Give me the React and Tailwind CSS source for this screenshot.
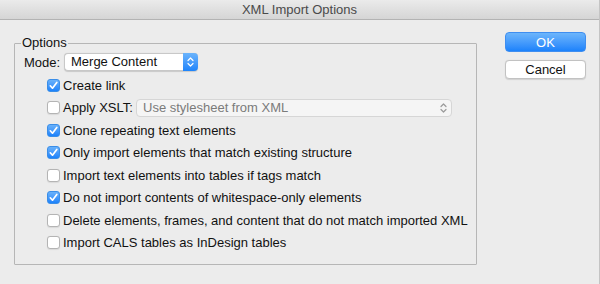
import React from "react";

const Check = () => (
  <svg width="9" height="9" viewBox="0 0 9 9" className="block">
    <path d="M1.3 4.8 L3.5 7.2 L7.8 1.4" fill="none" stroke="white" strokeWidth="1.7" strokeLinecap="round" strokeLinejoin="round" />
  </svg>
);

function Checkbox({ checked }) {
  if (checked) {
    return (
      <div className="w-[13px] h-[13px] shrink-0 rounded-[3px] bg-gradient-to-b from-[#69b1fa] to-[#1a82fb] border border-[#3a8ee8] flex items-center justify-center">
        <Check />
      </div>
    );
  }
  return (
    <div className="w-[13px] h-[13px] shrink-0 rounded-[3px] bg-white border border-[#b4b4b4] shadow-[0_0.5px_1px_rgba(0,0,0,0.08)]" />
  );
}

const Stepper = ({ color }) => (
  <svg width="7" height="10" viewBox="0 0 7 10" className="block">
    <path d="M1 3.5 L3.5 1 L6 3.5 M1 6.5 L3.5 9 L6 6.5" fill="none" stroke={color} strokeWidth="1.2" strokeLinecap="round" strokeLinejoin="round" />
  </svg>
);

function Row({ checked, children }) {
  return (
    <div className="h-[22.5px] flex items-center pl-[32px]">
      <Checkbox checked={checked} />
      <span className="ml-[3px] whitespace-nowrap">{children}</span>
    </div>
  );
}

export default function App() {
  return (
    <div
      className="w-[600px] h-[284px] bg-[#ececec] border-r border-[#c4c4c4] text-[13px] text-[#111] overflow-hidden"
      style={{ fontFamily: '"Liberation Sans", Arial, sans-serif' }}
    >
      <div className="h-[20px] bg-gradient-to-b from-[#ebebeb] to-[#d5d5d5] border-b border-[#b3b3b3] flex items-center justify-center text-[#4a4a4a] leading-none">
        XML Import Options
      </div>
      <div className="flex items-start pl-[14px]">
        <fieldset className="mt-[15px] w-[463px] h-[230px] border border-[#b6b6b6] rounded-[1px]">
          <legend className="ml-[6px] px-[1px] leading-[16px]">Options</legend>
          <div className="h-[18px] mt-[2px] flex items-center pl-[9px]">
            <span className="w-[34px] leading-none whitespace-nowrap">Mode:</span>
            <div className="ml-[6px] w-[134px] h-[18px] flex bg-white rounded-[4px] border border-[#c8c8c8] border-r-0 shadow-[0_0.5px_1px_rgba(0,0,0,0.15)]">
              <span className="flex-1 pl-[6px] leading-[16px]">Merge Content</span>
              <div className="w-[15px] -my-[1px] rounded-r-[4px] bg-gradient-to-b from-[#6ab3fb] to-[#1c84fb] flex items-center justify-center">
                <Stepper color="white" />
              </div>
            </div>
          </div>
          <div className="mt-[3px]">
            <Row checked>Create link</Row>
            <div className="h-[22.5px] flex items-center pl-[32px]">
              <Checkbox checked={false} />
              <span className="ml-[3px] w-[65px] whitespace-nowrap">Apply XSLT:</span>
              <div className="ml-[8px] w-[316px] h-[18px] flex items-center bg-[#f5f5f5] rounded-[4px] border border-[#d6d6d6] text-[#7b7b7b]">
                <span className="flex-1 pl-[6px]">Use stylesheet from XML</span>
                <div className="w-[15px] flex items-center justify-center">
                  <Stepper color="#9a9a9a" />
                </div>
              </div>
            </div>
            <Row checked>Clone repeating text elements</Row>
            <Row checked>Only import elements that match existing structure</Row>
            <Row checked={false}>Import text elements into tables if tags match</Row>
            <Row checked>Do not import contents of whitespace-only elements</Row>
            <Row checked={false}>Delete elements, frames, and content that do not match imported XML</Row>
            <Row checked={false}>Import CALS tables as InDesign tables</Row>
          </div>
        </fieldset>
        <div className="ml-[28px] mt-[12px] w-[81px] flex flex-col gap-[8px]">
          <div className="h-[20px] rounded-[4px] bg-gradient-to-b from-[#6cb5fb] to-[#1a82fb] border border-[#3f8ef0] text-white flex items-center justify-center leading-none">
            OK
          </div>
          <div className="h-[19px] rounded-[4px] bg-white border border-[#c2c2c2] shadow-[0_0.5px_1px_rgba(0,0,0,0.12)] flex items-center justify-center leading-none">
            Cancel
          </div>
        </div>
      </div>
    </div>
  );
}
